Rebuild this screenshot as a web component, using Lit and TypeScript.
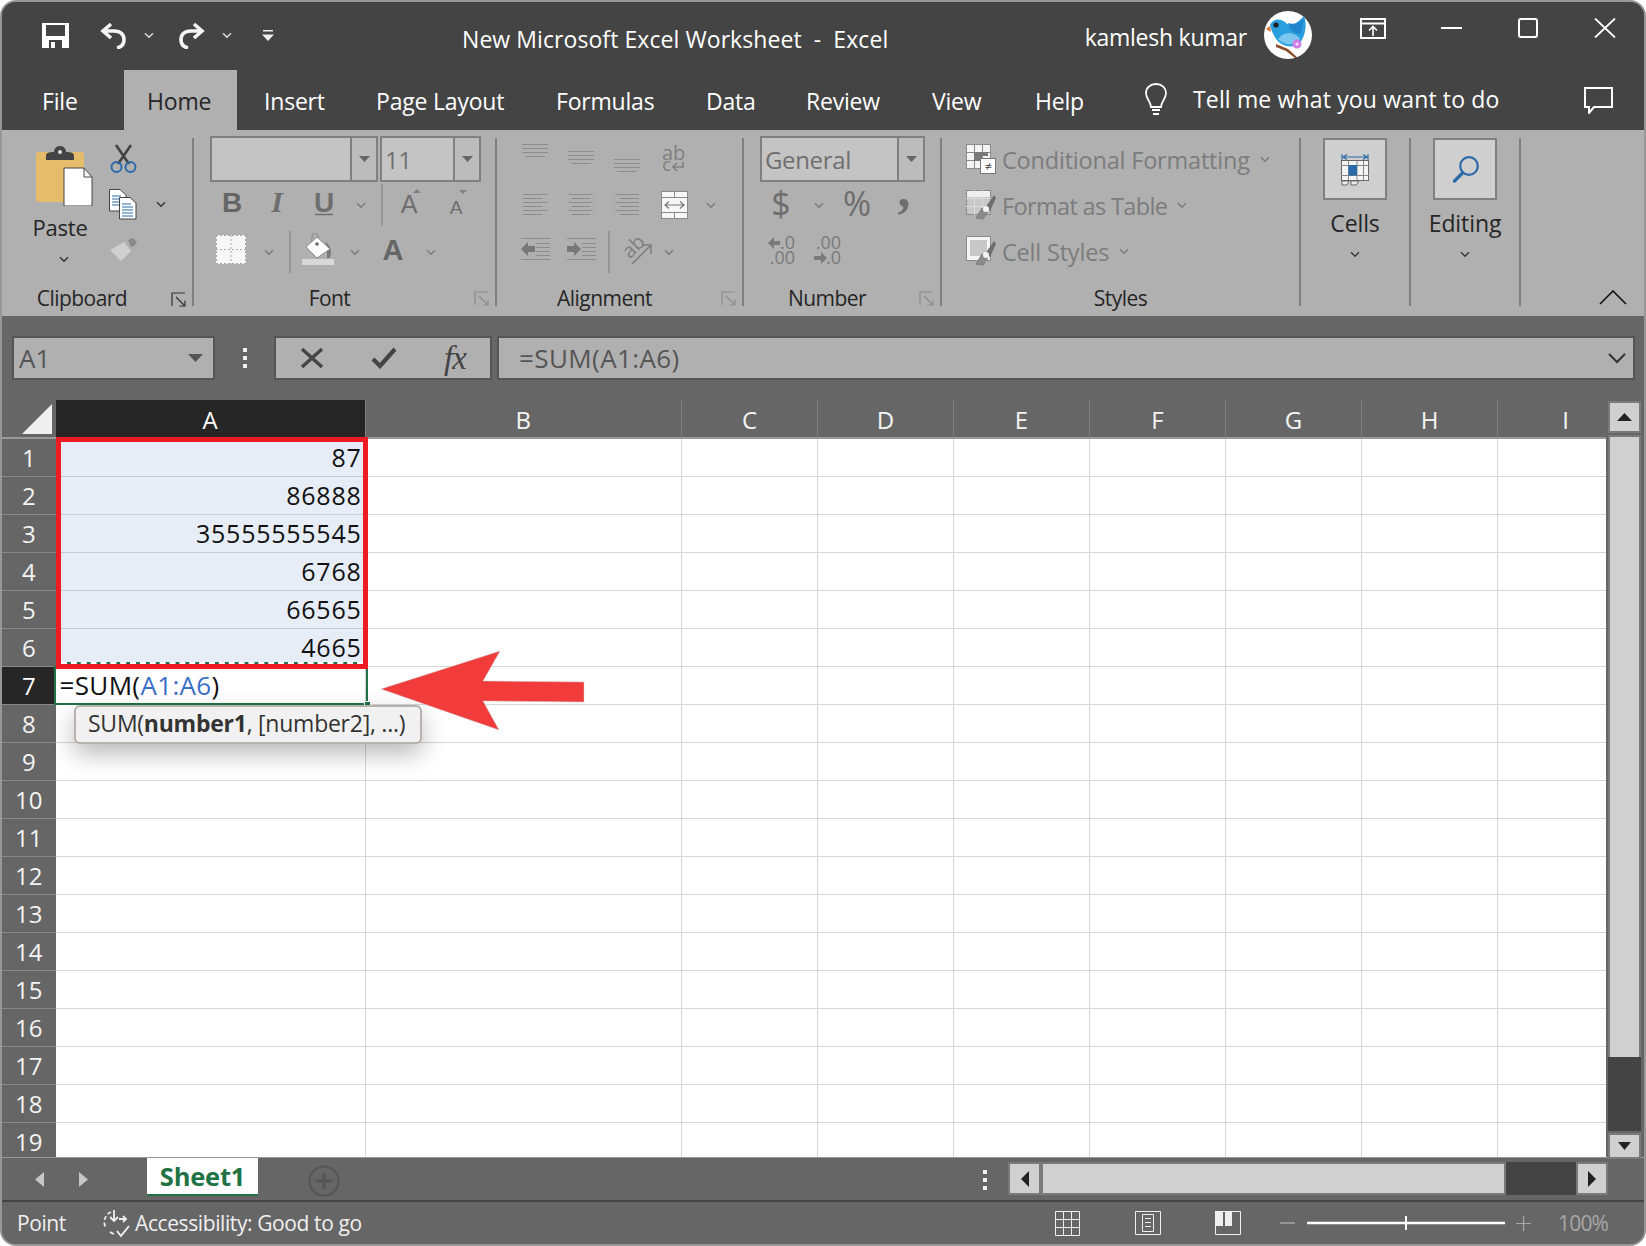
import { LitElement, html, css, svg } from "lit";
import { customElement } from "lit/decorators.js";

const chev = (c = "#7a7a7a", w = 10) => html`<svg width=${w} height="7" viewBox="0 0 10 7"><path d="M1 1.2 L5 5.2 L9 1.2" fill="none" stroke=${c} stroke-width="1.4"/></svg>`;
const launcher = (c = "#8c8c8c") => html`<svg class="launch" width="15" height="15" viewBox="0 0 15 15"><path d="M14 1H1V14M5 5L14 14M14 8.5V14H8.5" fill="none" stroke=${c} stroke-width="1.2"/></svg>`;
const rows = (c: string, w: number, h: number, list: number[][]) => html`<svg width=${w} height=${h} viewBox="0 0 ${w} ${h}">${list.map(l => svg`<path d="M${l[0]} ${l[2]}.5H${l[1]}" stroke=${c} stroke-width="1"/>`)}</svg>`;
const G = "#8c8c8c";
const dt = "#666";

const COLS = ["A", "B", "C", "D", "E", "F", "G", "H", "I"];
const DATA: Record<number, string> = { 1: "87", 2: "86888", 3: "35555555545", 4: "6768", 5: "66565", 6: "4665" };

@customElement("app-root")
export class AppRoot extends LitElement {
  static styles = css`
    :host { display: block; width: 1646px; height: 1246px; background: #fff; font-family: "Open Sans", "Noto Sans", sans-serif; }
    * { box-sizing: border-box; }
    svg { display: block; flex: none; }
    .win { width: 1646px; height: 1246px; border: 2px solid #979797; border-radius: 16px; overflow: hidden; background: #666; display: flex; flex-direction: column; position: relative; }

    .title { height: 68px; background: #444; color: #fff; display: flex; align-items: center; flex: none; padding-bottom: 2px; }
    .qat { display: flex; align-items: center; padding-left: 40px; }
    .ml31 { margin-left: 31px; } .ml17 { margin-left: 17px; } .ml23 { margin-left: 23px; } .ml16 { margin-left: 16px; } .ml29 { margin-left: 29px; }
    .doc { margin-left: 188px; width: 430px; font-size: 23px; letter-spacing: 0.07px; white-space: pre; padding-top: 8px; }
    .user { margin-left: auto; font-size: 23px; letter-spacing: -0.25px; white-space: nowrap; padding-top: 4px; }
    .avatar { margin-left: 17px; }
    .wc { display: flex; align-items: center; padding-right: 28px; margin-top: -14px; }
    .wc .wa { margin-left: 48px; } .wc .wb { margin-left: 55px; } .wc .wd { margin-left: 56px; } .wc .we { margin-left: 56px; }

    .tabs { height: 60px; background: #444; color: #fff; display: grid; grid-template-columns: 40px 82px 113px 27px 112px 180px 150px 100px 126px 103px 105px 4px 49px 391px 30px; align-items: center; font-size: 23px; letter-spacing: -0.2px; flex: none; white-space: nowrap; }
    .tab { height: 60px; display: flex; align-items: center; padding-top: 2px; }
    .tab.home { background: #b0b0b0; color: #262626; padding-left: 23px; }
    .tell { padding-top: 0; margin-top: -2px; letter-spacing: 0.15px; }

    .ribbon { height: 186px; background: #b0b0b0; display: flex; flex: none; color: #262626; font-size: 22px; }
    .sep { width: 2px; background: #808080; margin: 8px 0 10px; flex: none; }
    .grp { display: flex; flex-direction: column; padding-top: 6px; flex: none; position: relative; }
    .g-clip { width: 190px; } .g-font { width: 301px; padding-left: 16px; } .g-align { width: 245px; padding-left: 15px; } .g-num { width: 196px; padding-left: 16px; } .g-sty { width: 357px; padding-left: 24px; } .g-cell { width: 108px; align-items: center; padding-top: 8px; }
    .glabel { margin-top: auto; margin-bottom: 6px; height: 24px; display: flex; align-items: center; margin-left: -16px; font-size: 21px; letter-spacing: -0.55px; }
    .glabel span { flex: 1; text-align: center; }
    .g-clip .glabel { margin-left: 0; padding-left: 0; } .g-align .glabel { margin-left: -15px; } .g-sty .glabel { margin-left: -24px; }
    .launch { margin-right: 6px; margin-left: 9px; }
    .g-clip .launch { margin-top: 2px; }
    .clipbody { display: grid; grid-template-columns: 92px 34px 42px; grid-template-rows: 46px 44px 46px; padding-left: 12px; justify-items: center; align-items: center; margin-top: 0; }
    .paste { grid-row: 1 / span 3; display: flex; flex-direction: column; align-items: center; color: #262626; padding-top: 10px; align-self: start; }
    .paste svg:first-child { margin-left: 8px; }
    .paste .lbl { margin-top: 6px; font-size: 22px; letter-spacing: -0.2px; height: 30px; line-height: 30px; }
    .paste .pch { margin-top: 14px; }
    .sp2 { grid-column: 2 / span 2; grid-row: 1; justify-self: start; margin-left: 4px; }
    .copy { grid-column: 2; grid-row: 2; } .cchev { grid-column: 3; grid-row: 2; justify-self: start; margin-left: 16px; } .fp { grid-column: 2; grid-row: 3; }

    .r1 { display: flex; gap: 2px; height: 46px; }
    .combo { height: 46px; background: #c4c4c4; border: 2px solid #808080; display: flex; align-items: center; justify-content: space-between; font-size: 24px; color: #6f6f6f; }
    .combo .v { padding-left: 3px; letter-spacing: -0.35px; }
    .combo .dd { width: 26px; height: 42px; border-left: 2px solid #808080; display: flex; align-items: center; justify-content: center; background: #bcbcbc; }
    .fname { width: 168px; } .fsize { width: 101px; } .fgen { width: 165px; }
    .cell-r { display: grid; justify-items: center; align-items: center; }
    .fr2 { height: 42px; margin-top: 2px; grid-template-columns: 44px 46px 48px 26px 16px 42px 48px; grid-template-rows: 42px; }
    .fr3 { height: 44px; margin-top: 4px; grid-template-columns: 42px 34px 8px 48px 26px 50px 26px; grid-template-rows: 44px; }
    .up3 { margin-bottom: 6px; }
    .vs { width: 2px; background: #969696; height: 42px; }
    .ar1 { height: 46px; grid-template-columns: 46px 46px 46px 48px; grid-template-rows: 46px; }
    .ar2 { height: 42px; margin-top: 2px; grid-template-columns: 46px 46px 46px 48px 26px; grid-template-rows: 42px; }
    .ar3 { height: 44px; margin-top: 4px; grid-template-columns: 46px 46px 10px 46px 18px; grid-template-rows: 44px; }
    .nr2 { height: 42px; margin-top: 2px; grid-template-columns: 42px 34px 42px 52px; grid-template-rows: 42px; }
    .nr3 { height: 44px; margin-top: 4px; grid-template-columns: 42px 50px; grid-template-rows: 44px; }
    .dollar { font-size: 34px; color: #6e6e6e; line-height: 1; margin-bottom: 4px; }
    .pct { font-size: 34px; color: #6e6e6e; line-height: 1; margin-bottom: 4px; }
    .comma { font: bold 52px "Liberation Serif", serif; color: #6e6e6e; line-height: 30px; height: 30px; align-self: start; margin-top: -9px; }

    .srow { display: flex; align-items: center; height: 46px; color: #7c7c7c; font-size: 23.5px; letter-spacing: -0.2px; white-space: nowrap; padding-top: 1px; }
    .srow.tight { letter-spacing: -0.65px; }
    .srow .t { margin-left: 6px; margin-right: 10px; }
    .srow svg:first-child { margin-top: -2px; }
    .bigbtn { width: 64px; height: 62px; background: #cfcfcf; border: 2px solid #808080; display: flex; align-items: center; justify-content: center; }
    .cl { margin-top: 10px; height: 26px; line-height: 26px; font-size: 23px; letter-spacing: -0.1px; }
    .cv { margin-top: 15px; }
    .rest { flex: 1; position: relative; display: flex; justify-content: flex-end; align-items: flex-end; padding: 0 17px 11px 0; }

    .fbar { height: 84px; flex: none; background: #666; display: flex; padding-top: 20px; }
    .box { height: 44px; background: #b0b0b0; border: 2px solid #555; display: flex; align-items: center; color: #555; font-size: 26px; flex: none; }
    .name { margin-left: 10px; width: 203px; padding: 0 10px 0 5px; justify-content: space-between; }
    .dots { width: 59px; display: flex; flex-direction: column; gap: 4px; align-items: center; justify-content: center; height: 43px; flex: none; }
    .dots i { width: 4px; height: 4px; background: #f0f0f0; display: block; }
    .fxs { width: 218px; display: grid; grid-template-columns: 72px 72px 70px; justify-items: center; align-items: center; }
    .fx { font: italic 33px "Liberation Serif", serif; color: #444; letter-spacing: -1px; }
    .finp { margin-left: 5px; width: 1138px; padding: 0 7px 0 20px; justify-content: space-between; letter-spacing: 0.4px; }

    .sheet { height: 757px; flex: none; display: flex; position: relative; }
    .gwrap { width: 1604px; height: 757px; overflow: hidden; position: relative; background: #fff; }
    .gt { display: grid; grid-template-columns: 53.5px 310px 316.5px repeat(7, 136px); grid-template-rows: 38.5px repeat(19, 38px); width: 1632px; }
    .ch { background: #666; color: #f4f4f4; font-size: 24px; display: flex; align-items: center; justify-content: center; border-right: 1px solid #7f7f7f; border-bottom: 2px solid #989898; padding-top: 3px; }
    .ch.on { background: #262626; border-bottom-color: #217346; color: #fff; }
    .corner { background: #666; border-bottom: 2px solid #989898; padding: 4px 0 0 20px; }
    .rh { background: #666; color: #f4f4f4; font-size: 24px; display: flex; align-items: center; justify-content: center; border-bottom: 1px solid #8a8a8a; }
    .rh.on { background: #262626; color: #fff; }
    .c { border-right: 1px solid #d6d6d6; border-bottom: 1px solid #d6d6d6; background: #fff; font-size: 25px; letter-spacing: 0.75px; color: #111; display: flex; align-items: center; justify-content: flex-end; padding-right: 3px; white-space: nowrap; }
    .c.sel { background: #e6edf7; border-bottom-color: #c6ccd5; }
    .c.act { justify-content: flex-start; padding-left: 4px; letter-spacing: 0.35px; font-size: 26px; }
    .c.act b { color: #3b6ec6; font-weight: 400; }

    .redbox { position: absolute; left: 53.5px; top: 37px; width: 312px; height: 232px; border: 5px solid #ed1c24; pointer-events: none; }
    .ants { position: absolute; left: 58.5px; top: 262px; width: 302px; height: 2px; border-bottom: 2px dashed #fff; background: #217346; }
    .actbox { position: absolute; left: 52px; top: 266px; width: 314px; height: 39px; border: 2px solid #217346; border-top: none; }
    .handle { position: absolute; left: 362px; top: 301px; width: 7px; height: 7px; background: #217346; border: 1px solid #fff; }
    .tip { position: absolute; left: 72px; top: 305px; width: 348px; height: 39px; background: #f1f1f1; border: 2px solid #b5b1ab; border-radius: 6px; box-shadow: 0 10px 24px rgba(0,0,0,.28); font-size: 23px; letter-spacing: -0.25px; color: #333; display: flex; align-items: center; padding: 0 0 3px 12px; white-space: pre; }
    .arrow { position: absolute; left: 370px; top: 240px; }

    .vs-bar { flex: 1; background: #666; padding-top: 1px; display: flex; flex-direction: column; align-items: flex-start; padding-left: 2px; }
    .sb { background: #d0d0d0; border: 2px solid #7a7a7a; display: flex; align-items: center; justify-content: center; flex: none; }
    .v-up { width: 33px; height: 32px; }
    .v-th { width: 33px; height: 622px; margin-top: 2px; border-top: 2px solid #7a7a7a; background: #d0d0d0; flex: none; border-left: 2px solid #7a7a7a; border-right: 2px solid #7a7a7a; border-bottom: none; }
    .v-tr { width: 33px; height: 74px; background: #444; flex: none; }
    .v-dn { width: 33px; height: 26px; margin-top: 2px; }

    .sbar { height: 43px; flex: none; background: #666; display: flex; align-items: flex-start; border-top: 1px solid #979797; }
    .nl { margin-left: 33px; margin-top: 14px; } .nr { margin-left: 33px; margin-top: 14px; }
    .sheet1 { margin-left: 59px; width: 111px; height: 38px; background: #fff; color: #217346; border-bottom: 2px solid #217346; font-weight: 700; font-size: 25.5px; letter-spacing: -0.2px; display: flex; align-items: center; justify-content: center; flex: none; }
    .plus { margin-left: 50px; margin-top: 7px; }
    .hd { margin-left: 643px; margin-top: 12px; display: flex; flex-direction: column; gap: 4px; flex: none; }
    .hd i { width: 4px; height: 4px; background: #f0f0f0; display: block; }
    .hs { margin-left: 21px; margin-top: 4px; width: 600px; height: 33px; display: flex; flex: none; background: #7a7a7a; }
    .h-l { width: 33px; height: 33px; } .h-th { width: 465px; height: 33px; background: #d0d0d0; border: 2px solid #7a7a7a; } .h-tr { width: 70px; background: #444; } .h-r { width: 32px; height: 33px; }

    .status { flex: 1; border-top: 2px solid #444; background: #666; display: flex; align-items: center; color: #f0f0f0; font-size: 21px; letter-spacing: -0.4px; white-space: nowrap; }
    .pt { margin-left: 15px; width: 85px; }
    .ai { margin-right: 4px; }
    .st-r { margin-left: auto; display: flex; align-items: center; padding-right: 37px; }
    .m55 { margin-left: 55px; } .m54 { margin-left: 54px; } .m39 { margin-left: 39px; } .m12 { margin-left: 12px; } .m11 { margin-left: 11px; }
    .pc { margin-left: 27px; width: 49px; color: #a8a8a8; font-size: 21px; letter-spacing: -0.8px; text-align: right; }
  `;

  private brush(x: number, y: number) {
    return svg`<path d="M${x} ${y + 14} L${x + 9} ${y + 1} L${x + 11} ${y + 4} L${x + 5} ${y + 17} Z" fill="#6e6e6e"/><path d="M${x - 9} ${y + 24} L${x - 3} ${y + 14} L${x + 3} ${y + 18} L${x - 2} ${y + 25} Z" fill="#8a8a8a" stroke="#808080"/><circle cx=${x + 1} cy=${y + 15} r="3" fill="#f2f2f2"/>`;
  }

  render() {
    return html`<div class="win">
      <div class="title">
        <div class="qat">
          <svg width="27" height="25" viewBox="0 0 27 25"><path d="M0 0H27V25H0Z" fill="#fff"/><path d="M4 2H23V13H4Z" fill="#444"/><path d="M7 17H20V25H7Z" fill="#444"/><path d="M9 19H13V25H9Z" fill="#fff"/></svg>
          <svg class="ml31" width="26" height="27" viewBox="0 0 26 27"><path d="M11 2L3 9L11 16M4 9H14C21 9 24 13 24 18C24 22 21 25 17 26" fill="none" stroke="#f4f4f4" stroke-width="3.6"/></svg>
          <span class="ml17">${chev("#ddd", 12)}</span>
          <svg class="ml23" width="27" height="27" viewBox="0 0 27 27"><path d="M16 2L24 9L16 16M23 9H13C6 9 3 13 3 18C3 22 6 25 10 26" fill="none" stroke="#f4f4f4" stroke-width="3.6"/></svg>
          <span class="ml16">${chev("#ddd", 12)}</span>
          <svg class="ml29" width="12" height="11" viewBox="0 0 12 11"><path d="M1 0.8H11" stroke="#eee" stroke-width="1.6"/><path d="M0 4.5H12L6 11Z" fill="#eee"/></svg>
        </div>
        <div class="doc">New Microsoft Excel Worksheet  -  Excel</div>
        <div class="user">kamlesh kumar</div>
        <svg class="avatar" width="48" height="48" viewBox="0 0 48 48">
          <circle cx="24" cy="24" r="24" fill="#fff"/>
          <path d="M6 14C10 6 18 8 22 12C27 16 31 14 40 5C43 12 42 24 36 32C30 38 18 36 12 28C10 24 8 22 6 14Z" fill="#2a9fe0"/>
          <path d="M18 24C24 20 32 22 36 28C30 36 20 34 14 28Z" fill="#7cc7ef"/>
          <path d="M24 12C30 14 36 12 40 7L37 22C32 24 26 20 24 12Z" fill="#1f86cc"/>
          <path d="M6 15L2 18L7 21Z" fill="#e2702a"/>
          <circle cx="12" cy="14" r="2.6" fill="#222"/>
          <path d="M12 33L24 38L34 47L31 47L22 40L12 36Z" fill="#8a4f2a"/>
          <circle cx="33" cy="33" r="4.5" fill="#cd7fe6"/><circle cx="33" cy="33" r="1.6" fill="#f4d8ff"/>
        </svg>
        <div class="wc">
          <svg class="wa" width="26" height="21" viewBox="0 0 26 21"><path d="M1 1H25V20H1ZM1 5.5H25" fill="none" stroke="#fff" stroke-width="2"/><path d="M13 18V9M9 12.5L13 8.5L17 12.5" fill="none" stroke="#fff" stroke-width="1.6"/></svg>
          <svg class="wb" width="21" height="2" viewBox="0 0 21 2"><path d="M0 0H21V2H0Z" fill="#fff"/></svg>
          <svg class="wd" width="20" height="20" viewBox="0 0 20 20"><rect x="1" y="1" width="18" height="18" rx="2" fill="none" stroke="#fff" stroke-width="2"/></svg>
          <svg class="we" width="22" height="20" viewBox="0 0 22 20"><path d="M1 0.5L21 19.5M21 0.5L1 19.5" stroke="#fff" stroke-width="1.8"/></svg>
        </div>
      </div>

      <div class="tabs">
        <span></span><div class="tab">File</div><div class="tab home">Home</div><span></span>
        <div class="tab">Insert</div><div class="tab">Page Layout</div><div class="tab">Formulas</div><div class="tab">Data</div><div class="tab">Review</div><div class="tab">View</div><div class="tab">Help</div>
        <span></span>
        <svg width="24" height="34" viewBox="0 0 24 34"><path d="M7 24C7 19 2 16 2 10C2 5 6 1 12 1C18 1 22 5 22 10C22 16 17 19 17 24Z M8 27H16 M9 31H15" fill="none" stroke="#fff" stroke-width="1.8"/></svg>
        <div class="tab tell">Tell me what you want to do</div>
        <svg width="29" height="27" viewBox="0 0 29 27"><path d="M1 1H28V20H10L5 26V20H1Z" fill="none" stroke="#fff" stroke-width="2"/></svg>
      </div>

      <div class="ribbon">
        <div class="grp g-clip">
          <div class="clipbody">
            <div class="paste">
              <svg width="58" height="60" viewBox="0 0 58 60"><rect x="1" y="6" width="48" height="50" rx="3" fill="#e5bc6b"/><path d="M11 10C11 7 13 6 19 6C19 3 21 0 25 0C29 0 31 3 31 6C37 6 39 7 39 10V14H11Z" fill="#444"/><circle cx="25" cy="6" r="2" fill="#ddd"/><path d="M29 22H49L57 31V60H29Z" fill="#fff" stroke="#444" stroke-width="1"/><path d="M49 22V31H57" fill="none" stroke="#444"/></svg>
              <div class="lbl">Paste</div>
              <div class="pch">${chev("#333")}</div>
            </div>
            <svg class="sp2" width="27" height="30" viewBox="0 0 27 30"><path d="M6 1L19 20M21 1L8 20" stroke="#444" stroke-width="2.6"/><circle cx="6.5" cy="23" r="5" fill="none" stroke="#2b6aa8" stroke-width="2"/><circle cx="20.5" cy="23" r="5" fill="none" stroke="#2b6aa8" stroke-width="2"/></svg>
            <svg class="copy" width="28" height="31" viewBox="0 0 28 31"><path d="M.5.5H11L17 6V22H.5Z" fill="#fff" stroke="#444"/><path d="M3 7H12M3 10H14M3 13H14M3 16H14" stroke="#2b6aa8"/><path d="M10.5 8.5H21L27 14V30H10.5Z" fill="#fff" stroke="#444"/><path d="M13 15H22M13 18H24M13 21H24M13 24H24M13 27H24" stroke="#2b6aa8" stroke-width="1"/></svg>
            <span class="cchev">${chev("#333")}</span>
            <svg class="fp" width="27" height="23" viewBox="0 0 27 23"><path d="M18 2L23 0L27 4L24 8L21 9Z" fill="#8a8a8a"/><path d="M0 12L14 4L21 13L11 23Z" fill="#cfcfcf"/></svg>
          </div>
          <div class="glabel"><span>Clipboard</span>${launcher("#333")}</div>
        </div>
        <div class="sep"></div>

        <div class="grp g-font">
          <div class="r1">
            <div class="combo fname"><span class="v"></span><span class="dd"><svg width="11" height="6" viewBox="0 0 11 6"><path d="M0 0H11L5.5 6Z" fill=${dt}/></svg></span></div>
            <div class="combo fsize"><span class="v">11</span><span class="dd"><svg width="11" height="6" viewBox="0 0 11 6"><path d="M0 0H11L5.5 6Z" fill=${dt}/></svg></span></div>
          </div>
          <div class="cell-r fr2">
            <svg width="26" height="40" viewBox="0 0 26 40"><text x="13" y="27" text-anchor="middle" font-family="Liberation Sans" font-weight="700" font-size="28" fill="#666">B</text></svg>
            <svg width="26" height="40" viewBox="0 0 26 40"><text x="13" y="27" text-anchor="middle" font-family="Liberation Serif" font-style="italic" font-weight="700" font-size="30" fill="#6e6e6e">I</text></svg>
            <svg width="26" height="40" viewBox="0 0 26 40"><text x="13" y="27" text-anchor="middle" font-family="Liberation Sans" font-weight="700" font-size="28" fill="#6e6e6e">U</text><path d="M4 29.5H22" stroke="#6e6e6e" stroke-width="1.4"/></svg>
            ${chev()}
            <div class="vs"></div>
            <svg width="30" height="40" viewBox="0 0 30 40"><text x="13" y="28" text-anchor="middle" font-family="Liberation Sans" font-size="25" fill="#6e6e6e">A</text><path d="M17 8L21 4L25 8Z" fill="#808080"/></svg>
            <svg width="30" height="40" viewBox="0 0 30 40"><text x="15" y="29" text-anchor="middle" font-family="Liberation Sans" font-size="19" fill="#6e6e6e">A</text><path d="M18 5H26L22 9Z" fill="#808080"/></svg>
          </div>
          <div class="cell-r fr3">
            <svg class="up3" width="30" height="29" viewBox="0 0 30 29"><rect width="30" height="29" fill="#f7f7f7"/><path d="M15 0V29M0 14.5H30M.5 0V29M29.5 0V29M0 .5H30M0 28.5H30" stroke="#a6a6a6" stroke-dasharray="2 2"/></svg>
            ${chev()}
            <div class="vs"></div>
            <svg class="up3" width="33" height="33" viewBox="0 0 33 33"><path d="M10 11C9 4 11 0 13 0C15 0 16 3 16 6" fill="none" stroke="#8a8a8a" stroke-width="1.2"/><path d="M23 9C29 12 30 18 28 25H25V14Z" fill="#7a7a7a"/><path d="M4 14L15 4L28 16L15 25Z" fill="#fff" stroke="#8a8a8a"/><circle cx="15" cy="11" r="1.8" fill="#666"/><rect x="0" y="26" width="32" height="6" fill="#d8d8d8"/></svg>
            ${chev()}
            <svg class="up3" width="24" height="36" viewBox="0 0 24 36"><text x="12" y="29" text-anchor="middle" font-family="Liberation Sans" font-weight="700" font-size="29" fill="#666">A</text></svg>
            ${chev()}
          </div>
          <div class="glabel"><span>Font</span>${launcher()}</div>
        </div>
        <div class="sep"></div>

        <div class="grp g-align">
          <div class="cell-r ar1">
            ${rows(G, 26, 40, [[0, 26, 5], [0, 26, 9], [0, 26, 13], [3, 23, 17]])}
            ${rows(G, 26, 40, [[0, 26, 12], [0, 26, 16], [0, 26, 20], [3, 23, 24]])}
            ${rows(G, 26, 40, [[0, 26, 20], [0, 26, 24], [0, 26, 28], [3, 23, 32]])}
            <svg width="26" height="44" viewBox="0 -4 26 44"><text x="1" y="19" font-family="Open Sans" font-size="20" fill="#808080">ab</text><text x="1" y="30" font-family="Open Sans" font-size="19" fill="#808080">c</text><path d="M22 21V26H12M16 22L12 26L16 30" fill="none" stroke="#808080" stroke-width="1.6"/></svg>
          </div>
          <div class="cell-r ar2">
            ${rows(G, 26, 24, [[1, 25, 1], [1, 20, 5], [1, 25, 9], [1, 20, 13], [1, 25, 17], [1, 20, 21]])}
            ${rows(G, 26, 24, [[1, 25, 1], [4, 22, 5], [1, 25, 9], [4, 22, 13], [1, 25, 17], [4, 22, 21]])}
            ${rows(G, 26, 24, [[1, 25, 1], [6, 25, 5], [1, 25, 9], [6, 25, 13], [1, 25, 17], [6, 25, 21]])}
            <svg width="27" height="28" viewBox="0 0 27 28"><rect x=".5" y=".5" width="26" height="27" fill="#f7f7f7" stroke="#8a8a8a"/><path d="M0 6.5H27M0 21.5H27M13.5 0V6M13.5 22V28" stroke="#8a8a8a"/><path d="M4 14H23M8 10.5L4 14L8 17.5M19 10.5L23 14L19 17.5" fill="none" stroke="#777" stroke-width="1.2"/></svg>
            ${chev()}
          </div>
          <div class="cell-r ar3">
            <svg width="29" height="28" viewBox="0 0 29 28"><path d="M15 5.5H29M15 9.5H29M15 13.5H29M15 17.5H29M0 .5H29M0 21.5H29" stroke=${G}/><path d="M7 4L0 11L7 18V14H14V8H7Z" fill="#777"/></svg>
            <svg width="29" height="28" viewBox="0 0 29 28"><path d="M15 5.5H29M15 9.5H29M15 13.5H29M15 17.5H29M0 .5H29M0 21.5H29" stroke=${G}/><path d="M7 4L14 11L7 18V14H0V8H7Z" fill="#777"/></svg>
            <div class="vs"></div>
            <svg width="44" height="44" viewBox="-7 -7 44 44"><text x="12" y="16" text-anchor="middle" transform="rotate(-45 12 10)" font-family="Open Sans" font-size="20" fill="#808080">ab</text><path d="M10 27L29 8M20 8H29V17" fill="none" stroke="#808080" stroke-width="1.6"/></svg>
            ${chev()}
          </div>
          <div class="glabel"><span>Alignment</span>${launcher()}</div>
        </div>
        <div class="sep"></div>

        <div class="grp g-num">
          <div class="r1"><div class="combo fgen"><span class="v">General</span><span class="dd"><svg width="11" height="6" viewBox="0 0 11 6"><path d="M0 0H11L5.5 6Z" fill=${dt}/></svg></span></div></div>
          <div class="cell-r nr2">
            <span class="dollar">$</span>
            ${chev()}
            <span class="pct">%</span>
            <span class="comma">,</span>
          </div>
          <div class="cell-r nr3">
            <svg width="30" height="46" viewBox="0 -6 30 46"><text x="29" y="14" text-anchor="end" font-family="Open Sans" font-size="18" fill="#7a7a7a">.0</text><text x="29" y="29" text-anchor="end" font-family="Open Sans" font-size="18" fill="#7a7a7a">.00</text><path d="M2 8L8 2V6H14V10H8V14Z" fill="#7a7a7a"/></svg>
            <svg width="30" height="46" viewBox="0 -6 30 46"><text x="29" y="14" text-anchor="end" font-family="Open Sans" font-size="18" fill="#7a7a7a">.00</text><text x="29" y="29" text-anchor="end" font-family="Open Sans" font-size="18" fill="#7a7a7a">.0</text><path d="M2 21H9V17L15 23L9 29V25H2Z" fill="#7a7a7a"/></svg>
          </div>
          <div class="glabel"><span>Number</span>${launcher()}</div>
        </div>
        <div class="sep"></div>

        <div class="grp g-sty">
          <div class="srow">
            <svg width="30" height="30" viewBox="0 0 30 30"><rect x=".5" y=".5" width="24" height="24" fill="#f4f4f4" stroke="#8a8a8a"/><path d="M8.5 0V25M16.5 0V25M0 8.5H25M0 16.5H25" stroke="#8a8a8a"/><path d="M8 8H22V12H8ZM8 12H16V17H8Z" fill="#7a7a7a"/><rect x="14.5" y="14.5" width="15" height="15" fill="#fff" stroke="#777"/><text x="22" y="27" text-anchor="middle" font-family="Open Sans" font-size="13" fill="#444">≠</text></svg>
            <span class="t">Conditional Formatting</span>${chev()}
          </div>
          <div class="srow tight">
            <svg width="30" height="30" viewBox="0 0 30 30"><rect x=".5" y=".5" width="24" height="24" fill="#c8c8c8" stroke="#8a8a8a"/><path d="M8.5 0V25M16.5 0V25M0 8.5H25M0 16.5H25" stroke="#dcdcdc"/><rect x="1" y="1" width="23" height="6" fill="#efefef"/>${this.brush(19, 4)}</svg>
            <span class="t">Format as Table</span>${chev()}
          </div>
          <div class="srow">
            <svg width="30" height="30" viewBox="0 0 30 30"><rect x=".5" y=".5" width="24" height="24" fill="#f4f4f4" stroke="#8a8a8a"/><rect x="4" y="4" width="17" height="16" fill="#c8c8c8"/>${this.brush(19, 4)}</svg>
            <span class="t">Cell Styles</span>${chev()}
          </div>
          <div class="glabel"><span>Styles</span></div>
        </div>
        <div class="sep"></div>

        <div class="grp g-cell">
          <div class="bigbtn"><svg width="28" height="33" viewBox="0 0 28 33"><path d="M1 1V7M27 1V7M2 4H26M6 1.5L2 4L6 6.5M22 1.5L26 4L22 6.5" fill="none" stroke="#2b6aa8" stroke-width="1.1"/><rect x=".5" y="7.5" width="27" height="20" fill="#f4f4f4" stroke="#666"/><path d="M7.5 8V27M16 8V27M22.5 8V27M0 12.5H28M0 22.5H28" stroke="#888"/><rect x="7.5" y="12" width="8.5" height="10.5" fill="#2b6aa8"/><path d="M1 28H8L6 32H1ZM10 28H18L15 32H10Z" fill="#eee" stroke="#666"/></svg></div>
          <div class="cl">Cells</div>
          <div class="cv">${chev("#333")}</div>
        </div>
        <div class="sep"></div>
        <div class="grp g-cell">
          <div class="bigbtn"><svg width="27" height="27" viewBox="0 0 27 27"><circle cx="17" cy="10" r="8.8" fill="none" stroke="#2b6aa8" stroke-width="2.2"/><path d="M10.5 17L2.5 25" stroke="#2b6aa8" stroke-width="3.2" stroke-linecap="round"/></svg></div>
          <div class="cl">Editing</div>
          <div class="cv">${chev("#333")}</div>
        </div>
        <div class="sep"></div>
        <div class="rest"><svg width="28" height="15" viewBox="0 0 28 15"><path d="M1 14L14 1L27 14" fill="none" stroke="#111" stroke-width="1.6"/></svg></div>
      </div>

      <div class="fbar">
        <div class="box name"><span>A1</span><svg width="15" height="8" viewBox="0 0 15 8"><path d="M0 0H15L7.5 8Z" fill="#555"/></svg></div>
        <div class="dots"><i></i><i></i><i></i></div>
        <div class="box fxs">
          <svg width="24" height="22" viewBox="0 0 24 22"><path d="M2 2L22 20M22 2L2 20" stroke="#444" stroke-width="3.4"/></svg>
          <svg width="26" height="22" viewBox="0 0 26 22"><path d="M2 12L9 19L24 2" fill="none" stroke="#444" stroke-width="4.2"/></svg>
          <span class="fx">fx</span>
        </div>
        <div class="box finp"><span>=SUM(A1:A6)</span><svg width="18" height="11" viewBox="0 0 18 11"><path d="M1 1L9 9L17 1" fill="none" stroke="#333" stroke-width="2"/></svg></div>
      </div>

      <div class="sheet">
        <div class="gwrap">
          <div class="gt">
            <div class="corner"><svg width="30" height="30" viewBox="0 0 30 30"><path d="M30 0V30H0Z" fill="#efefef"/></svg></div>
            ${COLS.map((c, i) => html`<div class="ch ${i === 0 ? "on" : ""}">${c}</div>`)}
            ${Array.from({ length: 19 }, (_, r) => r + 1).map(r => html`
              <div class="rh ${r === 7 ? "on" : ""}">${r}</div>
              ${COLS.map((_, i) => {
                if (r === 7 && i === 0) return html`<div class="c act">=SUM(<b>A1:A6</b>)</div>`;
                const sel = i === 0 && r <= 6;
                return html`<div class="c ${sel ? "sel" : ""}">${sel ? DATA[r] : ""}</div>`;
              })}`)}
          </div>
          <div class="actbox"></div>
          <div class="ants"></div>
          <div class="redbox"></div>
          <div class="handle"></div>
          <div class="tip">SUM(<b>number1</b>, [number2], ...)</div>
          <svg class="arrow" width="216" height="90" viewBox="0 0 216 90"><path d="M9 49L128 11L111 41L212 42V62L111 61L127 90Z" fill="#f23b3b" stroke="#c9c9c9" stroke-width=".5"/></svg>
        </div>
        <div class="vs-bar">
          <div class="sb v-up"><svg width="15" height="8" viewBox="0 0 15 8"><path d="M7.5 0L15 8H0Z" fill="#222"/></svg></div>
          <div class="v-th"></div>
          <div class="v-tr"></div>
          <div class="sb v-dn"><svg width="13" height="8" viewBox="0 0 13 8"><path d="M0 0H13L6.5 8Z" fill="#222"/></svg></div>
        </div>
      </div>

      <div class="sbar">
        <svg class="nl" width="10" height="15" viewBox="0 0 10 15"><path d="M9 0V15L0 7.5Z" fill="#c6c6c6"/></svg>
        <svg class="nr" width="10" height="15" viewBox="0 0 10 15"><path d="M1 0V15L10 7.5Z" fill="#c6c6c6"/></svg>
        <div class="sheet1">Sheet1</div>
        <svg class="plus" width="32" height="32" viewBox="0 0 32 32"><circle cx="16" cy="16" r="14.5" fill="none" stroke="#555" stroke-width="2"/><path d="M16 8V24M8 16H24" stroke="#555" stroke-width="3"/></svg>
        <div class="hd"><i></i><i></i><i></i></div>
        <div class="hs">
          <div class="sb h-l"><svg width="8" height="16" viewBox="0 0 8 16"><path d="M8 0V16L0 8Z" fill="#222"/></svg></div>
          <div class="h-th"></div>
          <div class="h-tr"></div>
          <div class="sb h-r"><svg width="8" height="16" viewBox="0 0 8 16"><path d="M0 0V16L8 8Z" fill="#222"/></svg></div>
        </div>
      </div>

      <div class="status">
        <div class="pt">Point</div>
        <svg class="ai" width="29" height="29" viewBox="0 0 29 29"><path d="M9 3A11 11 0 0 0 4 19" fill="none" stroke="#eee" stroke-width="1.8" stroke-dasharray="4 2.5"/><path d="M12 1V12M8 8L12 12L16 8M17 10H24M21 7L24 10L21 13" fill="none" stroke="#eee" stroke-width="1.8"/><path d="M8 23A11 11 0 0 0 12 25" fill="none" stroke="#eee" stroke-width="1.8"/><path d="M15 22L19 27L27 17" fill="none" stroke="#eee" stroke-width="2"/></svg>
        <div>Accessibility: Good to go</div>
        <div class="st-r">
          <svg width="25" height="25" viewBox="0 0 25 25"><path d="M.5.5H24.5V24.5H.5ZM8.5 0V25M16.5 0V25M0 8.5H25M0 16.5H25" fill="none" stroke="#eee"/></svg>
          <svg class="m55" width="26" height="24" viewBox="0 0 26 24"><path d="M.5.5H25.5V23.5H.5ZM7.5 3.5H18.5V20.5H7.5ZM10 7.5H16M10 11.5H16M10 15.5H16" fill="none" stroke="#eee"/></svg>
          <svg class="m54" width="26" height="24" viewBox="0 0 26 24"><path d="M.5.5H25.5V23.5H.5Z" fill="none" stroke="#eee"/><path d="M0 0H8V15H0ZM10 0H17V15H10Z" fill="#eee"/></svg>
          <svg class="m39" width="15" height="2" viewBox="0 0 15 2"><path d="M0 1H15" stroke="#a8a8a8" stroke-width="1.4"/></svg>
          <svg class="m12" width="198" height="14" viewBox="0 0 198 14"><path d="M0 7H198" stroke="#fff" stroke-width="2.4"/><path d="M99 0V14" stroke="#fff" stroke-width="2"/></svg>
          <svg class="m11" width="15" height="15" viewBox="0 0 15 15"><path d="M0 7.5H15M7.5 0V15" stroke="#a8a8a8" stroke-width="1.2"/></svg>
          <div class="pc">100%</div>
        </div>
      </div>
    </div>`;
  }
}
